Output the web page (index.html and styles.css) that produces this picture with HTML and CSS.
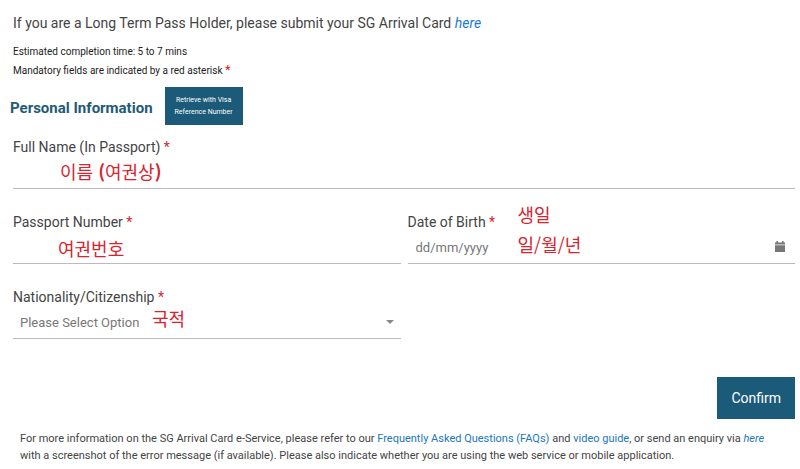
FILE: index.html
```html
<!doctype html>
<html lang="en">

<head>
  <meta charset="utf-8">
  <meta name="viewport" content="width=device-width, initial-scale=1">
  <title>SG Arrival Card</title>
  <link rel="stylesheet" href="styles.css">
</head>

<body>
  <main>
    <p class="intro">If you are a Long Term Pass Holder, please submit your SG Arrival Card <a href="#arrival-card"><em>here</em></a></p>

    <div class="hints">
      <p>Estimated completion time: 5 to 7 mins</p>
      <p>Mandatory fields are indicated by a red asterisk <span class="req big">*</span></p>
    </div>

    <div class="heading">
      <h1>Personal Information</h1>
      <button type="button" class="btn retrieve">Retrieve with Visa<br>Reference Number</button>
    </div>

    <form id="arrival">
      <div class="field wide">
        <label for="name">Full Name (In Passport) <span class="req">*</span></label>
        <div class="control"><input type="text" id="name"></div>
        <span class="note note-name" lang="ko">이름 <b>(</b>여권상<b>)</b></span>
      </div>

      <div class="field">
        <label for="passport">Passport Number <span class="req">*</span></label>
        <div class="control"><input type="text" id="passport"></div>
        <span class="note note-passport" lang="ko">여권번호</span>
      </div>

      <div class="field">
        <label for="dob">Date of Birth <span class="req">*</span></label>
        <div class="control">
          <input type="text" id="dob" placeholder="dd/mm/yyyy">
          <button type="button" class="calendar" aria-label="Choose date">
            <svg width="12" height="14" viewBox="0 0 12 14"><path d="M1 2.5h10v2H1zM1 5.2h10V12H1z"/><path d="M2.4 1h1.6v2.5H2.4zM8 1h1.6v2.5H8z"/></svg>
          </button>
        </div>
        <span class="note note-birthday" lang="ko">생일</span>
        <span class="note note-format" lang="ko">일/월/년</span>
      </div>

      <div class="field">
        <label for="nationality">Nationality/Citizenship <span class="req">*</span></label>
        <div class="control">
          <select id="nationality">
            <option>Please Select Option</option>
          </select>
          <svg class="caret" width="8" height="4" viewBox="0 0 8 4"><path d="M0 0h8L4 4z"/></svg>
        </div>
        <span class="note note-nationality" lang="ko">국적</span>
      </div>
    </form>

    <div class="actions">
      <button type="submit" form="arrival" class="btn confirm">Confirm</button>
    </div>

    <p class="info">For more information on the SG Arrival Card e-Service, please refer to our <a href="#faq">Frequently Asked Questions (FAQs)</a> and <a href="#video">video guide</a>, or send an enquiry via <a href="#enquiry"><em>here</em></a><br>with a screenshot of the error message (if available). Please also indicate whether you are using the web service or mobile application.</p>
  </main>
</body>

</html>
```
FILE: styles.css
```css
* { box-sizing:border-box; }
body { margin:0; background-color:#fff; color:#444; font-family:Roboto,"Liberation Sans",sans-serif; font-size:14px; }
main { padding:12px 5px 0 13px; }
p, h1 { margin:0; }
a { color:#2176bd; text-decoration:none; }
a:hover { text-decoration:underline; }
input, select, button { font:inherit; border:0; border-radius:0; }

.intro { line-height:22px; }
.intro a { color:#1c7cd6; }
.hints { margin-top:8px; color:#222; font-size:10px; line-height:19px; }
.req { color:#d9232e; }
.big { font-size:13px; line-height:1; }

.heading { display:flex; align-items:center; gap:12px; margin:7px 0 13px -3px; }
h1 { color:#235a75; font-size:15px; line-height:20px; font-weight:bold; padding-top:4px; }
.btn { background-color:#1b5a78; color:#fff; cursor:pointer; }
.retrieve { padding:7px 10px; font-size:7px; line-height:12px; }

/* Form grid */
form { display:grid; grid-template-columns:1fr 1fr; gap:24px 7px; }
.field { position:relative; }
.wide { grid-column:1 / -1; }
label { display:block; line-height:18px; }
.control { display:flex; align-items:center; height:33px; border-bottom:solid 1px #bbb; }
.control input, .control select { flex:1; min-width:0; height:32px; padding:0 8px; background:none; color:#777; font-size:13px; outline:0; }
.control select { appearance:none; padding-left:7px; }
.control input::placeholder { color:#777; opacity:1; }
.calendar { display:flex; padding:0; margin-right:9px; background:none; cursor:pointer; }
.calendar svg { fill:#777; }
.caret { margin-right:7px; fill:#888; }

/* Korean notes written over the fields */
.note { position:absolute; color:#d9232e; font-family:"Noto Sans CJK KR",sans-serif; font-size:18px; line-height:24px; white-space:nowrap; pointer-events:none; }
.note-name { left:47px; top:21px; }
.note-passport { left:45px; top:23px; }
.note-birthday { left:110px; top:-11px; }
.note-format { left:110px; top:19px; }
.note-nationality { left:139px; top:18px; }

.actions { display:flex; justify-content:flex-end; margin-top:38px; }
.confirm { padding:12px 14px; line-height:18px; }
.info { margin-top:11px; padding-left:7px; font-size:11px; line-height:17px; }
```
